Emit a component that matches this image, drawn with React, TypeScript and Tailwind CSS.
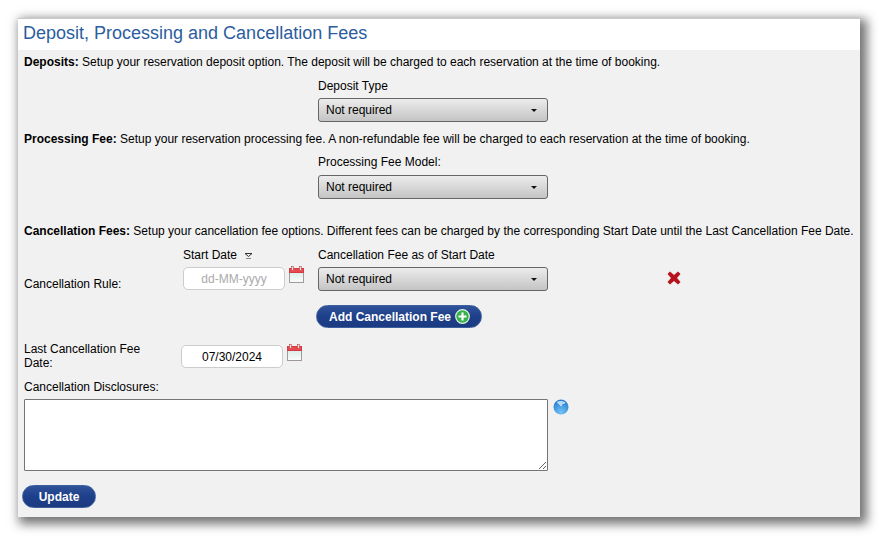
import * as React from 'react';

const CalendarIcon: React.FC = () => (
  <svg width="15" height="17" viewBox="0 0 15 17" className="shrink-0">
    <defs>
      <linearGradient id="calBody" x1="0" y1="0" x2="0" y2="1">
        <stop offset="0%" stopColor="#cfe8e2" />
        <stop offset="100%" stopColor="#fbfcfb" />
      </linearGradient>
    </defs>
    <rect x="0.5" y="2.5" width="14" height="14" fill="url(#calBody)" stroke="#a09a9a" />
    <rect x="0.5" y="2.5" width="14" height="4" fill="#e8484e" stroke="#d23c42" />
    <rect x="2.5" y="0.5" width="2" height="4" fill="#f5dede" stroke="#a33" strokeWidth="0.5" />
    <rect x="10.5" y="0.5" width="2" height="4" fill="#f5dede" stroke="#a33" strokeWidth="0.5" />
  </svg>
);

const FeeSelect: React.FC = () => (
  <div className="w-[230px] h-[24px] flex items-center justify-between pl-[7px] pr-[10px] rounded-[3px] border border-[#666] bg-gradient-to-b from-[#ececec] to-[#c4c4c4] text-[12px] text-black">
    <span>Not required</span>
    <svg width="6" height="3" viewBox="0 0 6 3">
      <path d="M0 0H6L3 3Z" fill="#111" />
    </svg>
  </div>
);

const PillButton: React.FC<{ className: string; children: React.ReactNode }> = ({ className, children }) => (
  <button className={`h-[23px] flex items-center rounded-full border border-[#3d5f9e] bg-gradient-to-b from-[#2f5399] via-[#1e3f8a] to-[#1b3a80] text-white text-[12px] font-bold ${className}`}>
    {children}
  </button>
);

const App: React.FC = () => {
  return (
    <div className="w-[878px] h-[536px] bg-white pt-[18px] pl-[18px] font-['Liberation_Sans',Arial,sans-serif] text-[12px] leading-[14px] text-black overflow-hidden">
      <div className="w-[842px] h-[499px] bg-[#f1f1f1] border-t border-[#c8c8c8] shadow-[4px_4px_10px_3px_rgba(0,0,0,0.55)]">
        <div className="h-[31px] bg-white pl-[5px] pt-[4px] text-[18px] leading-[21px] text-[#2b5d9e]">
          Deposit, Processing and Cancellation Fees
        </div>

        <div className="pl-[6px] pt-[5px]">
          <p>
            <b>Deposits:</b> Setup your reservation deposit option. The deposit will be charged to each reservation at the time of booking.
          </p>
          <div className="ml-[294px] mt-[10px]">
            <div>Deposit Type</div>
            <div className="mt-[5px]"><FeeSelect /></div>
          </div>

          <p className="mt-[10px]">
            <b>Processing Fee:</b> Setup your reservation processing fee. A non-refundable fee will be charged to each reservation at the time of booking.
          </p>
          <div className="ml-[294px] mt-[9px]">
            <div>Processing Fee Model:</div>
            <div className="mt-[6px]"><FeeSelect /></div>
          </div>

          <p className="mt-[25px]">
            <b>Cancellation Fees:</b> Setup your cancellation fee options. Different fees can be charged by the corresponding Start Date until the Last Cancellation Fee Date.
          </p>

          <div className="flex mt-[10px]">
            <div className="w-[159px] pt-[29px]">Cancellation Rule:</div>
            <div className="w-[135px]">
              <div className="flex items-center h-[14px]">
                Start Date
                <svg width="9" height="6" viewBox="0 0 9 6" className="ml-[7px] mt-[2px]">
                  <path d="M1 0.5H8L4.5 3.5Z" fill="none" stroke="#333" />
                  <path d="M2 5.5H7" stroke="#888" />
                </svg>
              </div>
              <div className="flex items-start gap-[4px] mt-[4px]">
                <div className="w-[102px] h-[23px] mt-[1px] pt-[1px] flex items-center justify-center rounded-[5px] border border-[#ccc] bg-white text-[#aaa]">
                  dd-MM-yyyy
                </div>
                <CalendarIcon />
              </div>
            </div>
            <div className="w-[349px]">
              <div>Cancellation Fee as of Start Date</div>
              <div className="mt-[5px]"><FeeSelect /></div>
            </div>
            <svg width="14" height="14" viewBox="0 0 14 14" className="mt-[23px]">
              <path d="M3 0.5 7 4 11 0.5 13.5 3 10 7 13.5 11 11 13.5 7 10 3 13.5 0.5 11 4 7 0.5 3Z" fill="#b5141c" />
            </svg>
          </div>

          <div className="ml-[292px] mt-[14px]">
            <PillButton className="w-[166px] pl-[12px] gap-[4px]">
              Add Cancellation Fee
              <svg width="15" height="15" viewBox="0 0 15 15">
                <circle cx="7.5" cy="7.5" r="6.8" fill="#37b24a" stroke="#e4f3e4" strokeWidth="1.2" />
                <path d="M7.5 3.5V11.5M3.5 7.5H11.5" stroke="#fff" strokeWidth="2.2" />
              </svg>
            </PillButton>
          </div>

          <div className="flex mt-[11px]">
            <div className="w-[157px] pt-[3px] pr-[30px]">Last Cancellation Fee Date:</div>
            <div className="flex items-start gap-[4px] mt-[5px]">
              <div className="w-[102px] h-[23px] mt-[1px] flex items-center justify-center rounded-[5px] border border-[#ccc] bg-white">
                07/30/2024
              </div>
              <CalendarIcon />
            </div>
          </div>

          <div className="mt-[10px]">Cancellation Disclosures:</div>
          <div className="flex items-start gap-[5px] mt-[5px]">
            <textarea className="block w-[524px] h-[72px] border border-[#767676] rounded-[1px] bg-white" />
            <svg width="16" height="16" viewBox="0 0 16 16" className="shrink-0">
              <defs>
                <radialGradient id="globe" cx="50%" cy="85%" r="75%">
                  <stop offset="0%" stopColor="#72c4f7" />
                  <stop offset="100%" stopColor="#2a7fd0" />
                </radialGradient>
              </defs>
              <circle cx="8" cy="8" r="7.5" fill="url(#globe)" />
              <path d="M4 3C6 1.5 10 1.5 12.5 3.5 11.5 5.5 10 4.5 9 5.5 9.5 7.5 7.5 8 7 6.5 6 5 4.5 5 4 3Z" fill="#cfe8fa" opacity="0.85" />
            </svg>
          </div>

          <div className="mt-[14px] -ml-[2px]">
            <PillButton className="w-[74px] justify-center">Update</PillButton>
          </div>
        </div>
      </div>
    </div>
  );
};

export default App;
